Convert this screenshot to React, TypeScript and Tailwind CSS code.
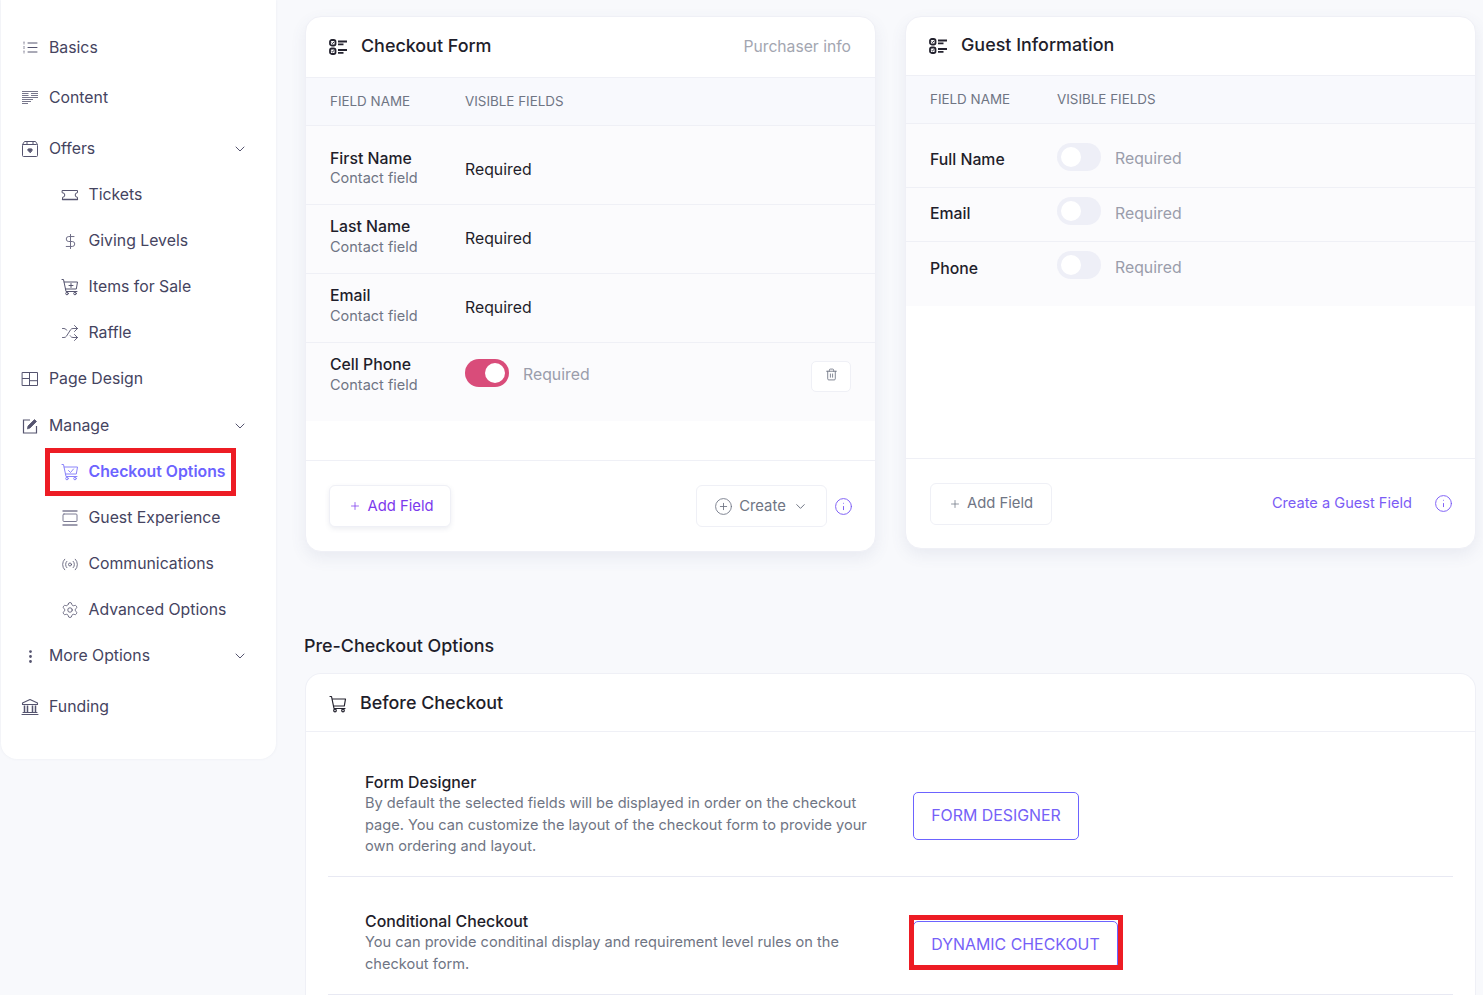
import React from "react";
import { ChevronDown, Trash2, Info, Plus, CirclePlus, Radio, Settings, EllipsisVertical, Shuffle, DollarSign } from "lucide-react";

const iconStroke = "#55546f";

function Svg({ children, color = iconStroke, w = 18, h = 18, vb = "0 0 18 18" }: { children: React.ReactNode; color?: string; w?: number; h?: number; vb?: string }) {
  return (
    <svg width={w} height={h} viewBox={vb} fill="none" stroke={color} strokeWidth={1} strokeLinecap="round" strokeLinejoin="round">
      {children}
    </svg>
  );
}

const ListIcon = () => (
  <Svg>
    <path d="M7 4h9M7 8.500h9M7 13h9" />
    <path d="M3 3v2M3 7.500v2M3 12v2" strokeDasharray="0.800 1" strokeWidth={0.800} />
  </Svg>
);
const ContentIcon = () => (
  <Svg>
    <path d="M1 2.500h16M1 4.500h6.500M10 4.500h7M1 6.500h6.500M10 6.500h7M1 8.500h16M1 10.500h11M1 12.500h9M1 14.500h6" strokeWidth={0.800} strokeLinecap="butt" />
  </Svg>
);
const OfferIcon = () => (
  <Svg>
    <rect x="1.500" y="4.500" width="15" height="12" rx="1" />
    <path d="M1.500 4.500 3.500 1.500h11l2 3M6 1.500v3M12 1.500v3" />
    <path d="M9 12.500 6.900 10.300a1.200 1.200 0 0 1 2.100-1.100 1.200 1.200 0 0 1 2.100 1.100z" fill={iconStroke} />
  </Svg>
);
const TicketIcon = () => (
  <Svg>
    <path d="M1.500 4.500h15v2.200a2.300 2.300 0 0 0 0 4.600v2.200h-15v-2.200a2.300 2.300 0 0 0 0-4.600z" />
    <path d="M1.500 13.500h15" strokeWidth={1.300} />
  </Svg>
);
const PenIcon = () => (
  <Svg>
    <path d="M9 3H2.500v13h13V9" strokeWidth={1.200} strokeLinecap="butt" strokeLinejoin="miter" />
    <path d="M6.500 11.500 7 9l6.500-6.500 2 2L9 11z" fill={iconStroke} strokeWidth={0.800} />
  </Svg>
);
const BankIcon = () => (
  <Svg>
    <path d="M9 1.500 16.500 5v1.500h-15V5z" strokeWidth={1.100} />
    <path d="M3.500 7.500v6.500M6.500 7.500v6.500M11.500 7.500v6.500M14.500 7.500v6.500" strokeWidth={1.500} strokeLinecap="butt" />
    <path d="M2 14.500h14M1 16.500h16" strokeWidth={1.100} />
  </Svg>
);
const CartBase = ({ color, children, width = 1 }: { color: string; children?: React.ReactNode; width?: number }) => (
  <svg width="18" height="18" viewBox="0 0 18 18" fill="none" stroke={color} strokeWidth={width} strokeLinecap="round" strokeLinejoin="round">
    <path d="M1 1.500h1.500L5 13.500h11M3.200 4h13.300l-1.200 7H4.600" />
    <circle cx="6" cy="15.500" r="1.300" />
    <circle cx="14" cy="15.500" r="1.300" />
    {children}
  </svg>
);
const GuestIcon = () => (
  <Svg color="#7d7c94">
    <path d="M2 2h14M2 16h14" strokeWidth={1.400} />
    <rect x="2" y="5" width="14" height="7.500" rx="1" />
  </Svg>
);
const LayoutIcon = () => (
  <Svg>
    <rect x="1.500" y="2.500" width="15" height="13" />
    <path d="M1.500 8.500h7M8.500 2.500v13M8.500 10.700h8" />
  </Svg>
);
const ChecklistIcon = () => (
  <svg width="18" height="16" viewBox="0 0 18 16" fill="none" stroke="#24232f" strokeLinecap="butt" strokeLinejoin="round">
    <rect x="1" y="1" width="5.500" height="5.500" rx="1.800" strokeWidth={1.800} />
    <rect x="1" y="9.500" width="5.500" height="5.500" rx="1.800" strokeWidth={1.800} />
    <path d="M2.600 3.800 3.500 4.600 5 2.800M2.600 12.300l.9.8L5 11.300" strokeWidth={1} />
    <path d="M9 2.500h9M9 5.300h5.500M9 11h9M9 13.800h5.500" strokeWidth={1.800} />
  </svg>
);

type RowProps = {
  icon: React.ReactNode;
  label: string;
  sub?: boolean;
  tall?: boolean;
  chevron?: boolean;
  active?: boolean;
  cls?: string;
};

function NavRow({ icon, label, sub, tall, chevron, active, cls = "" }: RowProps) {
  return (
    <div className={`relative flex items-center ${tall ? "h-[50px]" : "h-[46px]"} ${sub ? "pl-[60px]" : "pl-[20px]"} pr-[28px] ${cls}`}>
      <span className={`flex w-[18px] shrink-0 items-center justify-center ${sub ? "mr-[9.500px]" : "mr-[10px]"}`}>{icon}</span>
      <span className={`text-[15.800px] leading-none ${active ? "font-semibold text-[#6c63ff]" : "text-[#45445f]"}`}>{label}</span>
      {chevron && <ChevronDown size={16} className="ml-auto text-[#55546f]" strokeWidth={1.500} />}
      {active && <span className="absolute left-[44px] -top-px h-[48px] w-[191px] border-[5px] border-[#ed1c24]" />}
    </div>
  );
}

function Sidebar() {
  return (
    <aside className="ml-px w-[275px] shrink-0 self-start rounded-b-[16px] bg-white pb-[27px] pt-[23px] shadow-[0_0_3px_rgba(80,85,130,0.08)]">
      <NavRow tall icon={<ListIcon />} label="Basics" />
      <NavRow tall icon={<ContentIcon />} label="Content" />
      <NavRow cls="mt-[3px]" chevron icon={<OfferIcon />} label="Offers" />
      <NavRow sub icon={<TicketIcon />} label="Tickets" />
      <NavRow sub icon={<DollarSign size={17} color="#6d6c86" strokeWidth={1.400} />} label="Giving Levels" />
      <NavRow sub icon={<CartBase color={iconStroke}><path d="M10 5.500v4M8 7.500h4" /></CartBase>} label="Items for Sale" />
      <NavRow sub icon={<Shuffle size={18} color={iconStroke} strokeWidth={1.200} />} label="Raffle" />
      <NavRow icon={<LayoutIcon />} label="Page Design" />
      <NavRow cls="mt-px" chevron icon={<PenIcon />} label="Manage" />
      <NavRow sub active icon={<CartBase color="#8a83fa"><path d="m7.500 7.500 2 2 3-3.500" /></CartBase>} label="Checkout Options" />
      <NavRow sub icon={<GuestIcon />} label="Guest Experience" />
      <NavRow sub icon={<Radio size={19} color={iconStroke} strokeWidth={1.100} />} label="Communications" />
      <NavRow sub icon={<Settings size={18} color={iconStroke} strokeWidth={1.100} />} label="Advanced Options" />
      <NavRow chevron icon={<EllipsisVertical size={17} color={iconStroke} strokeWidth={2} />} label="More Options" />
      <NavRow tall cls="mt-[3px]" icon={<BankIcon />} label="Funding" />
    </aside>
  );
}

function Toggle({ on }: { on?: boolean }) {
  return (
    <span className={`flex h-[28px] w-[44px] shrink-0 items-center rounded-full p-[4px] ${on ? "justify-end bg-[#d94c7a]" : "justify-start bg-[#eeeff7]"}`}>
      <span className="h-[20px] w-[20px] rounded-full bg-white" />
    </span>
  );
}

function CardHead({ title, right, h }: { title: string; right?: string; h: string }) {
  return (
    <div className={`flex ${h} items-center border-b border-[#eff0f6] pb-px pl-[23px] pr-[24px]`}>
      <ChecklistIcon />
      <span className="ml-[14px] text-[17.900px] font-medium text-[#1f1e2b]">{title}</span>
      {right && <span className="ml-auto text-[15.700px] text-[#a3a6b1]">{right}</span>}
    </div>
  );
}

function TableHead({ second }: { second: string }) {
  return (
    <div className="flex h-[48px] items-center border-b border-[#eff0f6] bg-[#f8f9fd] pl-[24px] text-[13.400px] text-[#6f7584]">
      <span className={second}>FIELD NAME</span>
      <span>VISIBLE FIELDS</span>
    </div>
  );
}

function ContactRow({ name, h, pt, lead = "leading-[21px]", border = true, children }: { name: string; h: string; pt: string; lead?: string; border?: boolean; children: React.ReactNode }) {
  return (
    <div className={`flex ${h} items-start bg-[#fbfbfd] pl-[24px] pr-[24px] ${pt} ${border ? "border-b border-[#eff0f6]" : ""}`}>
      <div className="w-[135px] shrink-0">
        <div className={`text-[15.800px] font-medium text-[#1f1e2b] ${lead}`}>{name}</div>
        <div className="text-[14.500px] leading-[20px] text-[#6f7584]">Contact field</div>
      </div>
      {children}
    </div>
  );
}

function CheckoutForm() {
  return (
    <section className="h-[536px] w-[571px] shrink-0 rounded-[16px] border border-[#eff0f6] bg-white shadow-[0_6px_16px_rgba(80,85,130,0.09)]">
      <div className="flex h-full flex-col overflow-hidden rounded-[16px]">
        <CardHead title="Checkout Form" right="Purchaser info" h="h-[61px]" />
        <TableHead second="w-[135px]" />
        <ContactRow name="First Name" h="h-[79px]" pt="pt-[23px]" lead="leading-[19px]">
          <span className="mt-[11px] text-[15.800px] leading-[20px] text-[#1f1e2b]">Required</span>
        </ContactRow>
        <ContactRow name="Last Name" h="h-[69px]" pt="pt-[11px]">
          <span className="mt-[13px] text-[15.800px] leading-[20px] text-[#1f1e2b]">Required</span>
        </ContactRow>
        <ContactRow name="Email" h="h-[69px]" pt="pt-[11px]">
          <span className="mt-[13px] text-[15.800px] leading-[20px] text-[#1f1e2b]">Required</span>
        </ContactRow>
        <ContactRow name="Cell Phone" h="h-[78px]" pt="pt-[11px]" border={false}>
          <span className="mt-[5px]"><Toggle on /></span>
          <span className="ml-[14px] mt-[11px] text-[15.800px] leading-[20px] text-[#9a9dab]">Required</span>
          <button className="ml-auto mt-[7px] flex h-[31px] w-[40px] items-center justify-center rounded-[5px] border border-[#eff0f6] bg-white pb-[4px]">
            <Trash2 size={13} className="text-[#6f7584]" strokeWidth={1.600} />
          </button>
        </ContactRow>
        <div className="h-[40px] border-b border-[#eff0f6]" />
        <div className="flex flex-1 items-center pl-[23px] pr-[22px]">
          <button className="flex h-[42px] w-[122px] items-center justify-center gap-[6px] rounded-[6px] border border-[#eff0f6] bg-white pl-[3px] text-[14.800px] text-[#7c3aed] shadow-[0_2px_5px_rgba(80,85,130,0.1)]">
            <Plus size={12} strokeWidth={1.500} />
            Add Field
          </button>
          <button className="ml-auto flex h-[42px] w-[131px] items-center justify-center gap-[6px] rounded-[6px] border border-[#eff0f6] bg-white pr-[1px] text-[14.800px] text-[#6f7584]">
            <CirclePlus size={19} strokeWidth={1.100} />
            Create
            <ChevronDown size={15} strokeWidth={1.600} className="ml-px" />
          </button>
          <Info size={19} className="ml-[7px] text-[#7b5cf5]" strokeWidth={1.200} />
        </div>
      </div>
    </section>
  );
}

function GuestRow({ name, h, pt, border = true, nameMt, reqMt }: { name: string; h: string; pt: string; border?: boolean; nameMt: string; reqMt: string }) {
  return (
    <div className={`flex ${h} items-start bg-[#fbfbfd] pl-[24px] ${pt} ${border ? "border-b border-[#eff0f6]" : ""}`}>
      <span className={`w-[127px] shrink-0 text-[15.800px] font-medium leading-[20px] text-[#1f1e2b] ${nameMt}`}>{name}</span>
      <Toggle />
      <span className={`ml-[14px] text-[15.800px] leading-[20px] text-[#9a9dab] ${reqMt}`}>Required</span>
    </div>
  );
}

function GuestInfo() {
  return (
    <section className="h-[533px] min-w-0 flex-1 rounded-[16px] border border-[#eff0f6] bg-white shadow-[0_6px_16px_rgba(80,85,130,0.09)]">
      <div className="flex h-full flex-col overflow-hidden rounded-[16px]">
        <CardHead title="Guest Information" h="h-[59px]" />
        <TableHead second="w-[127px]" />
        <GuestRow name="Full Name" h="h-[64px]" pt="pt-[19px]" nameMt="mt-[7px]" reqMt="mt-[6px]" />
        <GuestRow name="Email" h="h-[54px]" pt="pt-[9px]" nameMt="mt-[7px]" reqMt="mt-[7px]" />
        <GuestRow name="Phone" h="h-[64px]" pt="pt-[9px]" border={false} nameMt="mt-[8px]" reqMt="mt-[7px]" />
        <div className="h-[153px] border-b border-[#eff0f6]" />
        <div className="flex flex-1 items-center pl-[24px] pr-[22px]">
          <button className="flex h-[42px] w-[122px] items-center justify-center gap-[6px] rounded-[6px] border border-[#eff0f6] bg-white text-[14.800px] text-[#6f7584]">
            <Plus size={12} strokeWidth={1.500} />
            Add Field
          </button>
          <span className="ml-auto text-[14.600px] text-[#7b5cf5]">Create a Guest Field</span>
          <Info size={19} className="ml-[22px] text-[#7b5cf5]" strokeWidth={1.200} />
        </div>
      </div>
    </section>
  );
}

function BeforeCheckout() {
  return (
    <section className="mt-[14px] w-[1171px] rounded-t-[16px] border border-b-0 border-[#eff0f6] bg-white">
      <div className="flex h-[58px] items-center border-b border-[#eff0f6] pl-[23px] pt-[2px]">
        <CartBase color="#24232f" width={1.200} />
        <span className="ml-[13px] text-[17.900px] font-medium text-[#1f1e2b]">Before Checkout</span>
      </div>
      <div className="mx-[22px]">
        <div className="flex h-[145px] items-start border-b border-[#e8e9f3] pl-[37px] pt-[40px]">
          <div className="w-[548px] shrink-0">
            <div className="text-[15.900px] font-medium leading-[21px] text-[#1f1e2b]">Form Designer</div>
            <p className="max-w-[510px] text-[14.600px] leading-[21.500px] text-[#6f7584]">
              By default the selected fields will be displayed in order on the checkout page. You can customize the layout of the checkout form to provide your own ordering and layout.
            </p>
          </div>
          <button className="mt-[20px] flex h-[48px] w-[166px] items-center justify-center rounded-[5px] border border-[#6c63ff] bg-white text-[15.900px] text-[#7561f7]">FORM DESIGNER</button>
        </div>
        <div className="flex h-[118px] items-start border-b border-[#e8e9f3] pl-[37px] pt-[35px]">
          <div className="w-[548px] shrink-0">
            <div className="text-[15.900px] font-medium leading-[20px] text-[#1f1e2b]">Conditional Checkout</div>
            <p className="max-w-[510px] text-[14.600px] leading-[21.500px] text-[#6f7584]">
              You can provide conditinal display and requirement level rules on the checkout form.
            </p>
          </div>
          <div className="relative mt-[9px]">
            <button className="flex h-[48px] w-[205px] items-center justify-center rounded-[5px] border border-[#6c63ff] bg-white text-[15.900px] text-[#7561f7]">DYNAMIC CHECKOUT</button>
            <span className="absolute -left-[4px] -top-[6px] h-[55px] w-[214px] border-[5px] border-[#ed1c24]" />
          </div>
        </div>
      </div>
    </section>
  );
}

export default function App() {
  return (
    <div className="flex h-[995px] w-full overflow-hidden bg-[#f8f9fc] font-['Inter',sans-serif]">
      <Sidebar />
      <main className="min-w-0 flex-1 pl-[29px] pr-[7px] pt-[16px]">
        <div className="flex items-start gap-[29px]">
          <CheckoutForm />
          <GuestInfo />
        </div>
        <h2 className="ml-[-1px] mt-[81px] text-[17.900px] font-medium leading-[26px] text-[#1f1e2b]">Pre-Checkout Options</h2>
        <BeforeCheckout />
      </main>
    </div>
  );
}
